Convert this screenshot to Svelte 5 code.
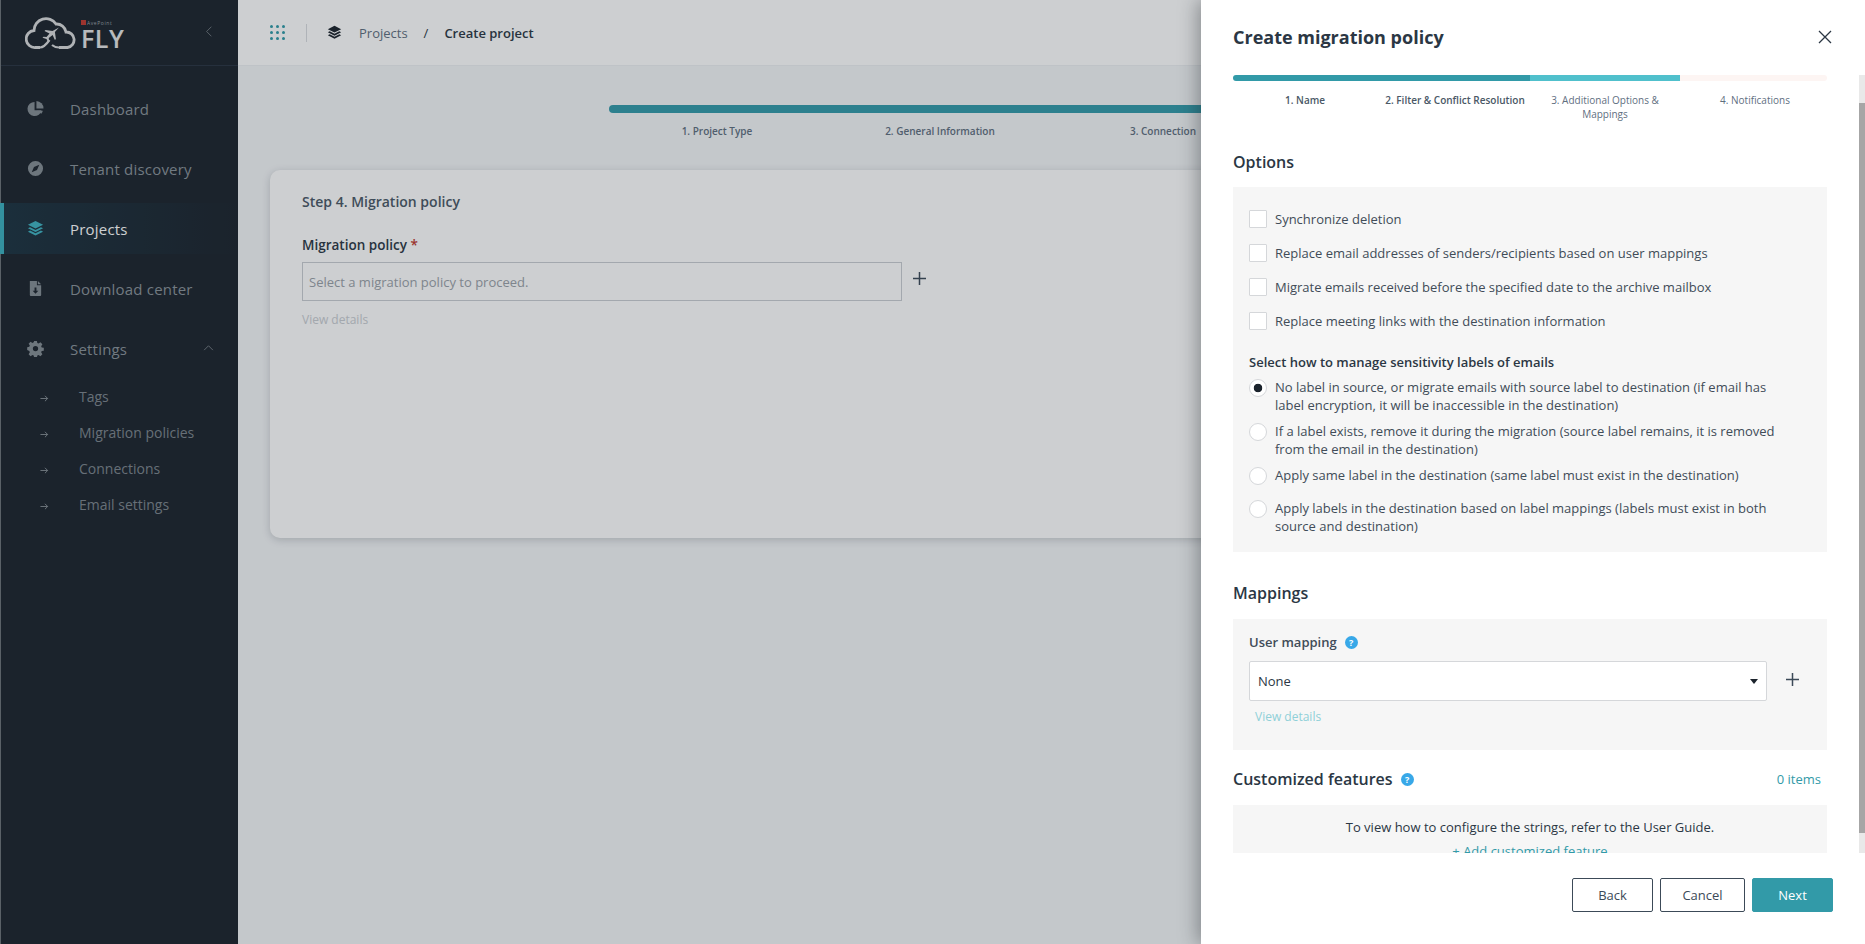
<script>
	const mainNav = [
		{ label: 'Dashboard', icon: 'pie' },
		{ label: 'Tenant discovery', icon: 'compass' },
		{ label: 'Projects', icon: 'layers', active: true },
		{ label: 'Download center', icon: 'file' },
		{ label: 'Settings', icon: 'gear', open: true }
	];
	const subNav = ['Tags', 'Migration policies', 'Connections', 'Email settings'];
	const wizardSteps = ['1. Project Type', '2. General Information', '3. Connection', '4. Migration policy'];
	const policySteps = [
		{ label: '1. Name', strong: true },
		{ label: '2. Filter & Conflict Resolution', strong: true },
		{ label: '3. Additional Options & Mappings' },
		{ label: '4. Notifications' }
	];
	const options = [
		'Synchronize deletion',
		'Replace email addresses of senders/recipients based on user mappings',
		'Migrate emails received before the specified date to the archive mailbox',
		'Replace meeting links with the destination information'
	];
	const labelChoices = [
		'No label in source, or migrate emails with source label to destination (if email has label encryption, it will be inaccessible in the destination)',
		'If a label exists, remove it during the migration (source label remains, it is removed from the email in the destination)',
		'Apply same label in the destination (same label must exist in the destination)',
		'Apply labels in the destination based on label mappings (labels must exist in both source and destination)'
	];
	let labelChoice = $state(0);
</script>

{#snippet navIcon(name)}
	{#if name === 'pie'}
		<svg viewBox="0 0 18 18" class="nav-icon"><path d="M8 2a7.5 7.5 0 1 0 7.4 8.8H8z" fill="currentColor" /><path d="M10 1v8h7.5A8 8 0 0 0 10 1z" fill="currentColor" /><path d="M10.2 11.4l5 3.2a8 8 0 0 0 1.6-3.2z" fill="currentColor" /></svg>
	{:else if name === 'compass'}
		<svg viewBox="0 0 18 18" class="nav-icon"><path fill-rule="evenodd" d="M9 1a8 8 0 1 1 0 16A8 8 0 0 1 9 1zm4 4L7.400 7.400 5 13l5.600-2.400z" fill="currentColor" /></svg>
	{:else if name === 'layers'}
		<svg viewBox="0 0 18 18" class="nav-icon"><path d="M9 1l8 4-8 4-8-4z" fill="currentColor" /><path d="M3.200 7.600L9 10.500l5.800-2.900L17 8.800l-8 4-8-4z" fill="currentColor" /><path d="M3.200 11.200L9 14.100l5.800-2.900L17 12.400l-8 4.100-8-4.100z" fill="currentColor" /></svg>
	{:else if name === 'file'}
		<svg viewBox="0 0 18 18" class="nav-icon"><path fill-rule="evenodd" d="M3 1h7.500v4.500H15V16a1 1 0 0 1-1 1H4a1 1 0 0 1-1-1zm5 7v3.500H6l3 3 3-3h-2V8zM11.500 1L15 4.500h-3.500z" fill="currentColor" /></svg>
	{:else}
		<svg viewBox="0 0 18 18" class="nav-icon"><path fill-rule="evenodd" d="M7.500 1h3l.4 2.200 1.400.6 1.900-1.300 2.100 2.100-1.300 1.900.6 1.400 2.200.4v3l-2.200.4-.6 1.400 1.300 1.900-2.100 2.100-1.900-1.300-1.400.6-.4 2.200h-3l-.4-2.200-1.400-.6-1.900 1.300-2.100-2.100 1.300-1.900-.6-1.400L.200 10.600v-3l2.200-.4.6-1.400-1.300-1.900 2.100-2.100 1.900 1.300 1.400-.6zM9 6.300a2.800 2.800 0 1 0 0 5.600 2.800 2.800 0 0 0 0-5.600z" fill="currentColor" /></svg>
	{/if}
{/snippet}

{#snippet helpDot()}
	<span class="help">?</span>
{/snippet}

{#snippet plusIcon()}
	<svg class="plus" viewBox="0 0 13 13" width="13" height="13"><path d="M6.500 0v13M0 6.500h13" fill="none" stroke="currentColor" stroke-width="1.500" /></svg>
{/snippet}

<div class="shell">
	<aside class="sidebar">
		<div class="brand">
			<svg class="cloud" viewBox="0 0 52 34" width="52" height="34">
				<path d="M15 31.500H10.500a8.500 8.500 0 0 1-1.500-17 12 12 0 0 1 22-6.500 9.500 9.500 0 0 1 10 8 7.800 7.800 0 0 1 1.500 15.500H34" fill="none" stroke="#d9dadb" stroke-width="2.800" />
				<path d="M15 31.500c4 0 7-4 9.500-7.500M34 31.500c-3 0-5-.8-7-2.500" fill="none" stroke="#d9dadb" stroke-width="2.200" />
				<path d="M33 12l-5.500 3-7-1-1 1 5 2.500-3 3.500-3-.2-1 1 4 1.200 1.500 3 1-1-.2-3 3.800-3 2.300 5 1-1-1-7 4-4.500z" fill="#d9dadb" />
			</svg>
			<div class="brand-text">
				<span class="brand-small"><i></i>AvePoint</span>
				<span class="brand-name">FLY</span>
			</div>
			<svg class="collapse" viewBox="0 0 10 14" width="8" height="13"><path d="M8 1L2 7l6 6" fill="none" stroke="currentColor" stroke-width="1" /></svg>
		</div>
		<nav class="nav">
			{#each mainNav as item}
				<div class="nav-item" class:active={item.active}>
					{@render navIcon(item.icon)}
					<span>{item.label}</span>
					{#if item.open}
						<svg class="caret" viewBox="0 0 12 8" width="11" height="7"><path d="M1 7l5-5 5 5" fill="none" stroke="currentColor" stroke-width="1" /></svg>
					{/if}
				</div>
			{/each}
			<div class="subnav">
				{#each subNav as sub}
					<div class="sub-item">
						<svg viewBox="0 0 10 10" width="9" height="9"><path d="M0.500 5h8M5.500 2l3 3-3 3" fill="none" stroke="currentColor" stroke-width="1" /></svg>
						<span>{sub}</span>
					</div>
				{/each}
			</div>
		</nav>
	</aside>

	<main class="main">
		<header class="topbar">
			<div class="dots">
				{#each Array(9) as _}<i></i>{/each}
			</div>
			<span class="divider"></span>
			<svg class="crumb-icon" viewBox="0 0 18 18" width="15" height="15"><path d="M9 1l8 4-8 4-8-4z" fill="currentColor" /><path d="M3.200 7.600L9 10.500l5.800-2.900L17 8.800l-8 4-8-4z" fill="currentColor" /><path d="M3.200 11.200L9 14.100l5.800-2.900L17 12.400l-8 4.100-8-4.100z" fill="currentColor" /></svg>
			<span class="crumb">Projects</span>
			<span class="slash">/</span>
			<span class="crumb current">Create project</span>
		</header>
		<div class="content">
			<div class="wizard">
				{#each wizardSteps as step}
					<div class="wizard-step">
						<div class="wizard-bar"></div>
						<span>{step}</span>
					</div>
				{/each}
			</div>
			<section class="card">
				<h2>Step 4. Migration policy</h2>
				<label class="field-label" for="policy">Migration policy <em>*</em></label>
				<div class="field-row">
					<input id="policy" placeholder="Select a migration policy to proceed." />
					{@render plusIcon()}
				</div>
				<span class="details muted">View details</span>
			</section>
		</div>
	</main>

	<div class="backdrop"></div>

	<aside class="panel">
		<header class="panel-head">
			<h1>Create migration policy</h1>
			<svg class="close" viewBox="0 0 14 14" width="14" height="14"><path d="M1 1l12 12M13 1L1 13" fill="none" stroke="currentColor" stroke-width="1.300" /></svg>
		</header>
		<div class="panel-scroll">
			<div class="policy-bars">
				<i class="done"></i>
				<i class="current"></i>
				<i class="todo"></i>
			</div>
			<div class="policy-steps">
				{#each policySteps as step}
					<span class="policy-step" class:strong={step.strong}>{step.label}</span>
				{/each}
			</div>

			<h3 class="section-title">Options</h3>
			<div class="box options">
				{#each options as option}
					<label class="check"><input type="checkbox" /><span>{option}</span></label>
				{/each}
				<div class="radio-title">Select how to manage sensitivity labels of emails</div>
				<div class="radios">
					{#each labelChoices as choice, i}
						<label class="radio">
							<input type="radio" name="labels" value={i} bind:group={labelChoice} />
							<span>{choice}</span>
						</label>
					{/each}
				</div>
			</div>

			<h3 class="section-title mappings">Mappings</h3>
			<div class="box mapping">
				<div class="mapping-label">User mapping {@render helpDot()}</div>
				<div class="field-row">
					<div class="select">
						<span>None</span>
						<i class="arrow"></i>
					</div>
					{@render plusIcon()}
				</div>
				<span class="details">View details</span>
			</div>

			<div class="custom-head">
				<h3 class="section-title">Customized features {@render helpDot()}</h3>
				<span class="items">0 items</span>
			</div>
			<div class="box custom">
				<p>To view how to configure the strings, refer to the User Guide.</p>
				<span class="add">+ Add customized feature</span>
			</div>
		</div>
		<footer class="panel-foot">
			<button class="btn">Back</button>
			<button class="btn cancel">Cancel</button>
			<button class="btn primary">Next</button>
		</footer>
	</aside>
</div>

<style>
	:global(body) {
		margin: 0;
		font-family: 'Open Sans', 'Noto Sans', sans-serif;
		background: #f4f6f8;
	}

	.shell {
		display: flex;
		height: 944px;
		overflow: hidden;
		position: relative;
		color: #2b3744;
	}

	/* left nav */
	.sidebar {
		width: 238px;
		flex: none;
		background: #1b232c;
		border-left: 1px solid #6c7278;
		box-sizing: border-box;
		color: #b3b8bd;
	}

	.brand {
		height: 66px;
		box-sizing: border-box;
		border-bottom: 1px solid #2a3442;
		display: flex;
		align-items: center;
		padding: 0 0 0 24px;
		position: relative;
	}

	.brand-text {
		display: flex;
		flex-direction: column;
		margin: 4px 0 0 4px;
		color: #e4e5e6;
	}

	.brand-small {
		font-size: 5px;
		line-height: 6px;
		letter-spacing: 0.6px;
		color: #9ea3a8;
		display: flex;
		align-items: center;
		gap: 1px;
		margin-bottom: 1px;
	}

	.brand-small i {
		width: 5px;
		height: 5px;
		background: #c0392f;
		display: block;
	}

	.brand-name {
		font-size: 25px;
		line-height: 23px;
		font-weight: 600;
		letter-spacing: 0.5px;
	}

	.collapse {
		position: absolute;
		right: 25px;
		top: 25px;
		color: #7d848a;
	}

	.nav {
		padding-top: 17px;
	}

	.nav-item {
		height: 51px;
		margin-bottom: 9px;
		display: flex;
		align-items: center;
		font-size: 15px;
		position: relative;
		padding-left: 26px;
		color: #8a9299;
		font-weight: 500;
		letter-spacing: 0.2px;
	}

	.nav-item.active {
		color: #fff;
		background: linear-gradient(90deg, #1c3240, #1b232c);
		box-shadow: inset 4px 0 0 #3ab0bf;
		margin-left: -1px;
		padding-left: 27px;
	}

	.nav-item.active .nav-icon {
		color: #3fb3c2;
	}

	.nav-icon {
		width: 17px;
		height: 17px;
		margin-right: 26px;
		color: #858d94;
	}

	.caret {
		position: absolute;
		right: 24px;
		top: 21px;
		color: #7d848a;
	}

	.subnav {
		margin-top: -5px;
	}

	.sub-item {
		height: 36px;
		display: flex;
		align-items: center;
		padding-left: 39px;
		font-size: 14px;
		color: #7d858c;
	}

	.sub-item svg {
		margin-right: 30px;
		color: #8b939a;
		position: relative;
		top: 2px;
	}

	/* page behind the drawer */
	.main {
		flex: 1;
		min-width: 0;
		display: flex;
		flex-direction: column;
	}

	.topbar {
		height: 66px;
		flex: none;
		box-sizing: border-box;
		background: #fff;
		border-bottom: 1px solid #eef0f2;
		display: flex;
		align-items: center;
		padding-left: 32px;
		font-size: 13px;
	}

	.dots {
		display: grid;
		grid-template-columns: repeat(3, 3px);
		gap: 3px;
		width: 15px;
	}

	.dots i {
		width: 3px;
		height: 3px;
		border-radius: 50%;
		background: #2f9aa8;
	}

	.divider {
		width: 1px;
		height: 18px;
		background: #d9dcdf;
		margin: 0 20px 0 21px;
	}

	.crumb-icon {
		color: #1b232c;
		margin-right: 17px;
	}

	.crumb {
		color: #5f6f7f;
	}

	.crumb.current {
		color: #2b3744;
		font-weight: 600;
	}

	.slash {
		margin: 0 16px;
		color: #2b3744;
	}

	.content {
		flex: 1;
		padding: 39px 32px 0;
		background: #f4f6f8;
	}

	.wizard {
		display: flex;
		justify-content: center;
	}

	.wizard-step {
		width: 223px;
		text-align: center;
		font-size: 10px;
		font-weight: 600;
		color: #5f6f7f;
	}

	.wizard-bar {
		height: 8px;
		background: #339aa9;
		margin-bottom: 11px;
	}

	.wizard-step:first-child .wizard-bar {
		border-radius: 4px 0 0 4px;
		margin-left: 3px;
	}

	.card {
		margin-top: 32px;
		height: 368px;
		box-sizing: border-box;
		background: #fff;
		border-radius: 10px;
		box-shadow: 0 2px 8px rgba(27, 35, 44, 0.2);
		padding: 22px 32px;
	}

	.card h2 {
		margin: 0 0 25px;
		font-size: 14px;
		line-height: 19px;
		font-weight: 600;
		color: #4a5866;
	}

	.field-label {
		display: block;
		font-size: 13.500px;
		line-height: 19px;
		font-weight: 600;
		margin-bottom: 7px;
	}

	.field-label em {
		color: #c0392f;
		font-style: normal;
	}

	.field-row {
		display: flex;
		align-items: center;
	}

	#policy {
		width: 600px;
		height: 39px;
		box-sizing: border-box;
		border: 1px solid #c9cdd2;
		padding: 0 6px;
		font: 13px 'Open Sans', sans-serif;
		background: #fff;
		outline: none;
	}

	#policy::placeholder {
		color: #9aa1a8;
		opacity: 1;
	}

	.plus {
		color: #3c4a58;
		margin-left: 11px;
		margin-top: -6px;
		flex: none;
	}

	.details {
		display: block;
		font-size: 12px;
		line-height: 17px;
		margin-top: 10px;
		color: #8fd0d8;
	}

	.details.muted {
		color: #c9cdd2;
	}

	.backdrop {
		position: absolute;
		inset: 0;
		background: rgba(27, 35, 44, 0.22);
	}

	/* drawer */
	.panel {
		position: absolute;
		top: 0;
		right: 0;
		bottom: 0;
		width: 664px;
		background: #fff;
		box-shadow: -3px 0 18px rgba(20, 26, 32, 0.38);
		display: flex;
		flex-direction: column;
	}

	.panel-head {
		height: 75px;
		flex: none;
		box-sizing: border-box;
		padding: 24px 33px 0 32px;
		display: flex;
		justify-content: space-between;
	}

	.panel-head h1 {
		margin: 0;
		font-size: 18px;
		line-height: 26px;
		font-weight: 700;
		color: #2b3744;
	}

	.close {
		color: #2b3744;
		margin: 6px 0 0;
	}

	.panel-scroll {
		height: 778px;
		flex: none;
		overflow: hidden;
		padding: 0 32px;
		box-sizing: border-box;
		position: relative;
	}

	.panel-scroll::after {
		content: '';
		position: absolute;
		right: 0;
		top: 0;
		bottom: 0;
		width: 6px;
		background: linear-gradient(#e9e9e9 0 28px, #a6a6a6 28px 758px, #e9e9e9 758px);
	}

	.policy-bars {
		display: flex;
		width: 594px;
		height: 6px;
		border-radius: 3px;
		overflow: hidden;
	}

	.policy-bars .done {
		width: 297px;
		background: #329aa8;
	}

	.policy-bars .current {
		width: 150px;
		background: #50c0cc;
	}

	.policy-bars .todo {
		width: 147px;
		background: #fdf5f3;
	}

	.policy-steps {
		display: flex;
		margin: 12px 0 0 -3px;
	}

	.policy-step {
		width: 150px;
		box-sizing: border-box;
		padding: 0 16px;
		text-align: center;
		font-size: 10px;
		line-height: 14px;
		color: #5f6f7f;
	}

	.policy-step.strong {
		font-weight: 600;
		padding: 0;
		color: #4a5866;
	}

	.section-title {
		margin: 0;
		font-size: 16px;
		line-height: 22px;
		font-weight: 600;
		color: #2b3744;
		display: flex;
		align-items: center;
		gap: 8px;
	}

	.policy-steps + .section-title {
		margin-top: 30px;
	}

	.box {
		background: #f6f6f6;
		width: 594px;
		box-sizing: border-box;
		padding: 16px;
		font-size: 13px;
		color: #2b3744;
	}

	.options {
		margin-top: 14px;
		height: 365px;
		padding-top: 15px;
	}

	.check {
		display: flex;
		align-items: center;
		height: 34px;
		gap: 8px;
		color: #414c58;
	}

	.check input {
		appearance: none;
		margin: 0;
		width: 18px;
		height: 18px;
		background: #fff;
		border: 1px solid #d5d7da;
		border-radius: 1px;
		flex: none;
	}

	.radio-title {
		font-weight: 600;
		margin-top: 15px;
		line-height: 18px;
		font-size: 13px;
	}

	.radio {
		display: flex;
		gap: 8px;
		line-height: 18px;
		color: #414c58;
	}

	.radio span {
		max-width: 510px;
	}

	.radio:nth-child(1),
	.radio:nth-child(2) {
		margin-bottom: 8px;
	}

	.radio:nth-child(3) {
		margin-bottom: 14px;
	}

	.radios {
		margin-top: 7px;
	}

	.radio input {
		appearance: none;
		margin: 1px 0 0;
		width: 18px;
		height: 18px;
		border: 1px solid #d5d7da;
		border-radius: 50%;
		background: #fff;
		flex: none;
		box-sizing: border-box;
	}

	.radio input:checked {
		background: radial-gradient(circle, #1b232c 0 4px, #fff 4.600px);
	}

	.mappings {
		margin-top: 30px;
	}

	.mapping {
		margin-top: 15px;
		height: 131px;
		padding-top: 14px;
	}

	.mapping-label {
		font-weight: 600;
		line-height: 18px;
		display: flex;
		align-items: center;
		gap: 8px;
		margin-bottom: 10px;
		color: #414c58;
	}

	.help {
		width: 13px;
		height: 13px;
		border-radius: 50%;
		background: #38a8e8;
		color: #fff;
		font-size: 9px;
		line-height: 13px;
		font-weight: 700;
		text-align: center;
		display: inline-block;
	}

	.select {
		width: 518px;
		height: 40px;
		box-sizing: border-box;
		border: 1px solid #d5d7da;
		border-radius: 2px;
		background: #fff;
		display: flex;
		align-items: center;
		justify-content: space-between;
		padding: 0 8px;
	}

	.arrow {
		width: 0;
		height: 0;
		border: 4.500px solid transparent;
		border-top: 5px solid #1b232c;
		border-bottom: 0;
	}

	.mapping .plus {
		margin-left: 19px;
		margin-top: -4px;
	}

	.mapping .details {
		margin-left: 6px;
		margin-top: 7px;
	}

	.custom-head {
		display: flex;
		justify-content: space-between;
		align-items: center;
		width: 588px;
		margin-top: 18px;
	}

	.items {
		font-size: 13px;
		color: #329aa8;
	}

	.custom {
		margin-top: 15px;
		text-align: center;
		padding-top: 13px;
	}

	.custom p {
		margin: 0 0 6px;
		line-height: 18px;
	}

	.add {
		color: #329aa8;
	}

	.panel-foot {
		flex: 1;
		display: flex;
		justify-content: flex-end;
		gap: 7px;
		padding: 25px 32px 0 0;
	}

	.btn {
		width: 81px;
		height: 34px;
		box-sizing: border-box;
		font: 13px 'Open Sans', sans-serif;
		font-weight: 500;
		color: #3c4a58;
		background: #fff;
		border: 1px solid #3c4a58;
		border-radius: 2px;
	}

	.btn.cancel {
		width: 85px;
	}

	.btn.primary {
		background: #329aa8;
		border-color: #329aa8;
		color: #fff;
	}
</style>
